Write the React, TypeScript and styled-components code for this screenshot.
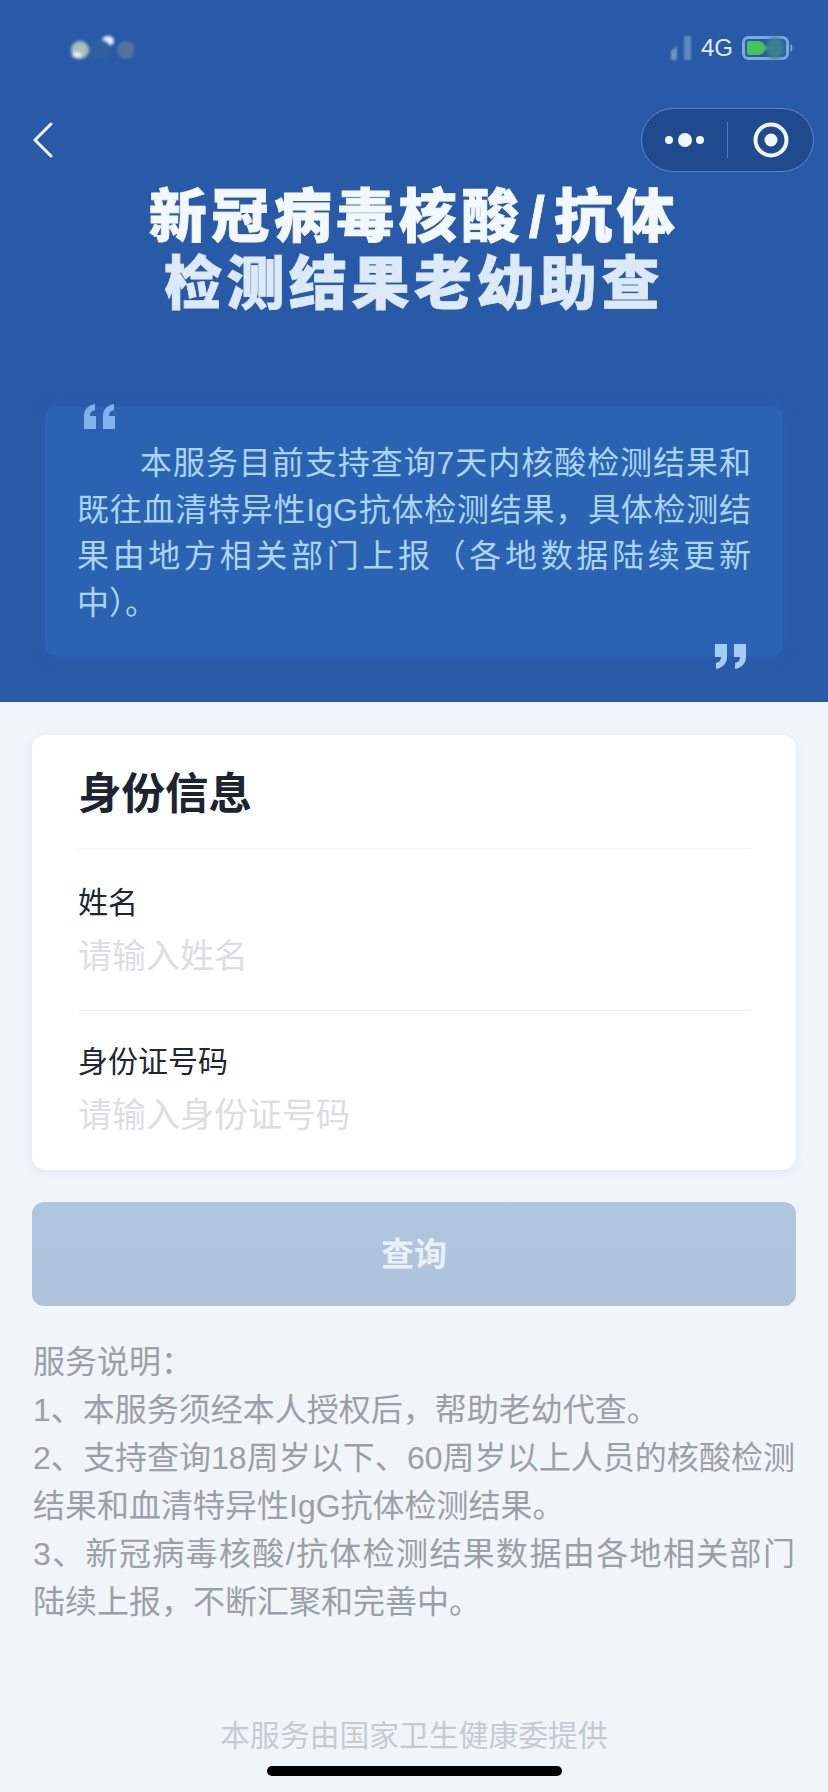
import styled, { createGlobalStyle } from "styled-components";

const GlobalStyle = createGlobalStyle`
  * {
    box-sizing: border-box;
  }

  body {
    margin: 0;
    background: #f0f5fa;
    font-family: "Liberation Sans", "Noto Sans CJK SC", sans-serif;
  }
`;

// Start Styled Components
const Page = styled.div`
  width: 828px;
  height: 1792px;
  display: flex;
  flex-direction: column;
  overflow: hidden;
  background: #f0f5fa;
`;

const Header = styled.header`
  height: 702px;
  flex-shrink: 0;
  display: flex;
  flex-direction: column;
  background: #285aa8;
`;

const StatusBar = styled.div`
  height: 30px;
  margin-top: 33px;
  padding: 0 34px 0 68px;
  display: flex;
  justify-content: space-between;
  align-items: center;
`;

const StatusRight = styled.div`
  display: flex;
  align-items: center;
  gap: 9px;
`;

const NetworkLabel = styled.span`
  font-size: 24px;
  line-height: 30px;
  color: #dcecf8;
`;

const NavBar = styled.nav`
  height: 64px;
  margin-top: 45px;
  padding: 0 14px 0 32px;
  display: flex;
  justify-content: space-between;
  align-items: center;
`;

const Capsule = styled.div`
  width: 173px;
  height: 64px;
  display: flex;
  align-items: center;
  border: 1px solid #5a86c4;
  border-radius: 32px;
  background: #1f4a8f;
`;

const CapsuleSlot = styled.div`
  flex: 1;
  height: 36px;
  display: flex;
  align-items: center;
  justify-content: center;
`;

const CapsuleDivider = styled.div`
  width: 1px;
  height: 36px;
  background: #4f78b4;
`;

const Title = styled.h1`
  margin: 11px 0 0;
  font-size: 58px;
  font-weight: 900;
  letter-spacing: 4.5px;
  text-align: center;
`;

const TitleLine = styled.span<{ $color: string }>`
  display: block;
  height: 67px;
  line-height: 67px;
  color: ${(props) => props.$color};
  -webkit-text-stroke: 0.8px ${(props) => props.$color};
`;

const TitleSlash = styled.span`
  margin: 0 5px;
`;

const QuotePanel = styled.section`
  position: relative;
  height: 249px;
  margin: 90px 45px 0;
  padding: 33px 32px 0;
  border-radius: 10px;
  background: #2b63b2;
  box-shadow: 0 0 8px 2px rgba(43, 99, 178, 0.6);
`;

const QuoteLine = styled.div<{ $indent?: boolean; $last?: boolean }>`
  height: 46.5px;
  font-size: 32px;
  line-height: 46.5px;
  color: #a9d5f6;
  text-align: justify;
  text-align-last: ${(props) => (props.$last ? "left" : "justify")};
  text-justify: inter-character;
  white-space: nowrap;
  padding-left: ${(props) => (props.$indent ? "63px" : "0")};
`;

const OpenQuote = styled.svg`
  position: absolute;
  left: 39px;
  top: -3px;
`;

const CloseQuote = styled.svg`
  position: absolute;
  right: 37px;
  bottom: -13px;
  transform: rotate(180deg);
`;

const Main = styled.main`
  flex: 1;
  padding: 33px 32px 0;
  display: flex;
  flex-direction: column;
`;

const Card = styled.section`
  height: 435px;
  padding: 0 45px 0 46px;
  border-radius: 14px;
  background: #ffffff;
  box-shadow: 0 2px 10px rgba(120, 150, 190, 0.14);
`;

const CardTitle = styled.h2`
  height: 114px;
  margin: 0;
  padding-bottom: 3px;
  display: flex;
  align-items: center;
  font-size: 43.5px;
  font-weight: 700;
  color: #1b2430;
  border-bottom: 1px solid #f2f3f5;
`;

const Field = styled.div<{ $divided?: boolean }>`
  height: ${(props) => (props.$divided ? "162px" : "159px")};
  padding-top: ${(props) => (props.$divided ? "32px" : "29px")};
  border-bottom: ${(props) => (props.$divided ? "1px solid #f0f1f3" : "none")};
`;

const FieldLabel = styled.label`
  display: block;
  font-size: 30px;
  line-height: 44px;
  color: #1d2631;
`;

const FieldInput = styled.input`
  display: block;
  width: 100%;
  height: 52px;
  margin-top: 5px;
  padding: 0;
  border: none;
  outline: none;
  background: transparent;
  font-family: inherit;
  font-size: 34px;
  color: #1d2631;

  &::placeholder {
    color: #dcdee0;
    opacity: 1;
  }
`;

const QueryButton = styled.button`
  height: 104px;
  margin-top: 32px;
  padding-bottom: 5px;
  flex-shrink: 0;
  border: none;
  border-radius: 12px;
  background: linear-gradient(180deg, #adc7df 0%, #b0c3dd 100%);
  font-family: inherit;
  font-size: 33px;
  font-weight: 700;
  color: #e9f0f7;
`;

const Notes = styled.div`
  margin-top: 32px;
  padding: 0 1px;
`;

const NoteLine = styled.p`
  margin: 0;
  font-size: 32px;
  line-height: 48px;
  color: #9b9fa6;
  text-align: justify;
`;

const Footer = styled.footer`
  margin-top: auto;
  padding-bottom: 16px;
  display: flex;
  flex-direction: column;
  align-items: center;
  gap: 8px;
`;

const FooterText = styled.span`
  font-size: 29.8px;
  line-height: 44px;
  color: #c6cbd1;
`;

const HomeBar = styled.div`
  width: 295px;
  height: 10px;
  border-radius: 5px;
  background: #000000;
`;
// End Styled Components

const quoteMarks = "M0 25V12C0 5 5 1 11 0V6C8 7 6 8 6 12H12V25ZM19 25V12C19 5 24 1 30 0V6C27 7 25 8 25 12H31V25Z";

const CarrierBlob = () => (
  <svg width="66" height="30" viewBox="0 0 66 30" style={{ filter: "blur(1.6px)" }}>
    <circle cx="12" cy="17" r="9" fill="#a9c0b8" />
    <ellipse cx="9" cy="22" rx="5" ry="3" fill="#e8f4f0" />
    <ellipse cx="40" cy="8" rx="6" ry="5" fill="#e6f1fb" />
    <ellipse cx="32" cy="17" rx="11" ry="10" fill="#2f5f9f" />
    <ellipse cx="58" cy="17" rx="9" ry="9" fill="#55749a" />
  </svg>
);

const Signal = () => (
  <svg width="22" height="24" viewBox="0 0 22 24" style={{ filter: "blur(1px)" }}>
    <path d="M1 24V15L7 10V24Z" fill="#6f96c8" />
    <rect x="14" y="0" width="7" height="24" rx="1" fill="#5e8ac2" />
  </svg>
);

const Battery = () => (
  <svg width="52" height="26" viewBox="0 0 52 26">
    <rect x="1.5" y="2.5" width="44" height="21" rx="5" fill="none" stroke="#7fa8de" strokeWidth="3" />
    <rect x="5" y="6" width="14" height="14" rx="2" fill="#46c45a" />
    <path d="M19 6L26 13L19 20Z" fill="#46c45a" />
    <ellipse cx="33" cy="13" rx="9" ry="11" fill="#3d7f8f" style={{ filter: "blur(2px)" }} />
    <path d="M48.5 9C51 10 51 16 48.5 17Z" fill="#7fa8de" />
  </svg>
);

const BackIcon = () => (
  <svg width="22" height="36" viewBox="0 0 22 36">
    <path d="M19 2L3 18L19 34" fill="none" stroke="#f2f8fd" strokeWidth="3" strokeLinecap="round" strokeLinejoin="round" />
  </svg>
);

const MoreIcon = () => (
  <svg width="40" height="18" viewBox="0 0 40 18">
    <circle cx="4" cy="9" r="4" fill="#f2f7fc" />
    <circle cx="20" cy="9" r="7" fill="#f2f7fc" />
    <circle cx="35" cy="9" r="4" fill="#f2f7fc" />
  </svg>
);

const TargetIcon = () => (
  <svg width="36" height="36" viewBox="0 0 36 36">
    <circle cx="18" cy="18" r="15.5" fill="none" stroke="#f2f7fc" strokeWidth="4" />
    <circle cx="18" cy="18" r="6.5" fill="#f2f7fc" />
  </svg>
);

const App = () => {
  return (
    <Page>
      <GlobalStyle />
      <Header>
        <StatusBar>
          <CarrierBlob />
          <StatusRight>
            <Signal />
            <NetworkLabel>4G</NetworkLabel>
            <Battery />
          </StatusRight>
        </StatusBar>
        <NavBar>
          <BackIcon />
          <Capsule>
            <CapsuleSlot>
              <MoreIcon />
            </CapsuleSlot>
            <CapsuleDivider />
            <CapsuleSlot>
              <TargetIcon />
            </CapsuleSlot>
          </Capsule>
        </NavBar>
        <Title>
          <TitleLine $color="#f3f8fd">
            新冠病毒核酸<TitleSlash>/</TitleSlash>抗体
          </TitleLine>
          <TitleLine $color="#dce9f7">检测结果老幼助查</TitleLine>
        </Title>
        <QuotePanel>
          <OpenQuote width="31" height="25" viewBox="0 0 31 25">
            <path d={quoteMarks} fill="#7fb3ee" />
          </OpenQuote>
          <QuoteLine $indent>本服务目前支持查询7天内核酸检测结果和</QuoteLine>
          <QuoteLine>{"既往血清特异性IgG抗体检测结果\uFF0C具体检测结"}</QuoteLine>
          <QuoteLine>{"果由地方相关部门上报\uFF08各地数据陆续更新"}</QuoteLine>
          <QuoteLine $last>{"中\uFF09。"}</QuoteLine>
          <CloseQuote width="31" height="25" viewBox="0 0 31 25">
            <path d={quoteMarks} fill="#a4cdf4" />
          </CloseQuote>
        </QuotePanel>
      </Header>
      <Main>
        <Card>
          <CardTitle>身份信息</CardTitle>
          <Field $divided>
            <FieldLabel>姓名</FieldLabel>
            <FieldInput placeholder="请输入姓名" />
          </Field>
          <Field>
            <FieldLabel>身份证号码</FieldLabel>
            <FieldInput placeholder="请输入身份证号码" />
          </Field>
        </Card>
        <QueryButton>查询</QueryButton>
        <Notes>
          <NoteLine>{"服务说明\uFF1A"}</NoteLine>
          <NoteLine>{"1、本服务须经本人授权后\uFF0C帮助老幼代查。"}</NoteLine>
          <NoteLine>2、支持查询18周岁以下、60周岁以上人员的核酸检测结果和血清特异性IgG抗体检测结果。</NoteLine>
          <NoteLine>{"3、新冠病毒核酸/抗体检测结果数据由各地相关部门陆续上报\uFF0C不断汇聚和完善中。"}</NoteLine>
        </Notes>
        <Footer>
          <FooterText>本服务由国家卫生健康委提供</FooterText>
          <HomeBar />
        </Footer>
      </Main>
    </Page>
  );
};

export default App;
